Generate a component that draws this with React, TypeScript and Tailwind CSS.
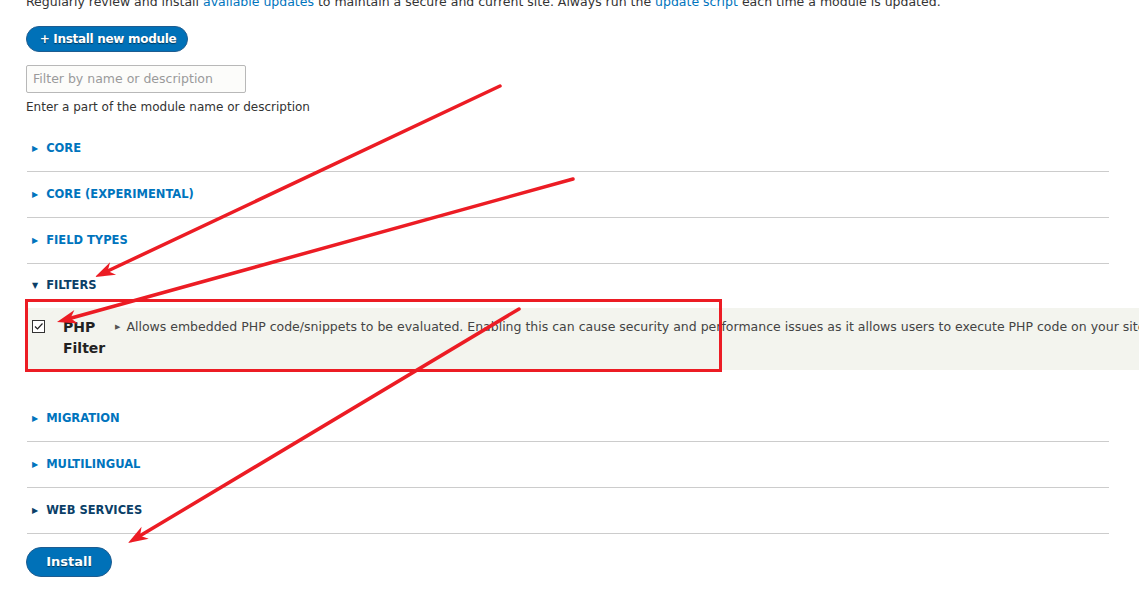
import React from 'react'

const sections = [
  { title: 'CORE', dark: false },
  { title: 'CORE (EXPERIMENTAL)', dark: false },
  { title: 'FIELD TYPES', dark: false },
]

const sectionsAfter = [
  { title: 'MIGRATION', dark: false },
  { title: 'MULTILINGUAL', dark: false },
  { title: 'WEB SERVICES', dark: true },
]

const arrows = [
  { from: [500, 86], to: [95, 277] },
  { from: [573, 179], to: [57, 322] },
  { from: [519, 309], to: [128, 543] },
]

const Arrow = ({ from, to }: { from: number[]; to: number[] }) => {
  const dx = to[0] - from[0]
  const dy = to[1] - from[1]
  const len = Math.hypot(dx, dy)
  const ux = dx / len
  const uy = dy / len
  const L = 20
  const W = 7
  const bx = to[0] - ux * L
  const by = to[1] - uy * L
  const p1 = `${bx - uy * W},${by + ux * W}`
  const p2 = `${bx + uy * W},${by - ux * W}`
  const notchX = to[0] - ux * (L - 6)
  const notchY = to[1] - uy * (L - 6)
  return (
    <g>
      <line x1={from[0]} y1={from[1]} x2={notchX} y2={notchY} stroke="#ec1c24" strokeWidth={3.5} strokeLinecap="round" />
      <polygon points={`${to[0]},${to[1]} ${p1} ${notchX},${notchY} ${p2}`} fill="#ec1c24" />
    </g>
  )
}

const Summary = ({ title, dark }: { title: string; dark: boolean }) => (
  <div className="flex items-center h-[46px] pl-[5px] border-b border-[#cccccc]">
    <span className={`text-[8px] mr-[8px] ${dark ? 'text-[#0b3f68]' : 'text-[#0074bd]'}`}>▶</span>
    <span className={`text-[11.5px] font-bold ${dark ? 'text-[#0b3f68]' : 'text-[#0074bd]'}`}>{title}</span>
  </div>
)

const App = () => {
  return (
    <div className="relative w-full h-[592px] overflow-hidden bg-white text-[#333333] font-['DejaVu_Sans',sans-serif]">
      <div className="pl-[26px] pr-[30px]">
        <p className="mt-[-7px] text-[12.5px] leading-[18px] whitespace-nowrap text-[#333333]">
          Regularly review and install <span className="text-[#0074bd]">available updates</span> to maintain a secure and current site. Always run the <span className="text-[#0074bd]">update script</span> each time a module is updated.
        </p>

        <button className="mt-[15px] h-[26px] w-[162px] pl-[2px] rounded-full bg-[#0071b8] border border-[#1e5c90] text-white text-[12px] tracking-[-0.3px] font-bold flex items-center justify-center [text-shadow:0_1px_1px_rgba(0,0,0,0.5)]">
          + Install new module
        </button>

        <div className="mt-[13px] h-[28px] w-[220px] border border-[#b8b8b8] rounded-[2px] bg-[#fcfcfa] flex items-center px-[6px] text-[12.5px] text-[#9a9a9a]">
          Filter by name or description
        </div>

        <div className="mt-[6px] text-[12px] leading-[16px] text-[#333333]">
          Enter a part of the module name or description
        </div>

        <div className="mt-[11px] ml-[1px]">
          {sections.map((s) => (
            <Summary key={s.title} title={s.title} dark={s.dark} />
          ))}

          <div className="pb-[26px]">
            <div className="flex items-center h-[44px] pl-[5px]">
              <span className="text-[8px] mr-[8px] text-[#0b3f68]">▼</span>
              <span className="text-[11.5px] font-bold text-[#0b3f68]">FILTERS</span>
            </div>
            <div className="w-[1120px] h-[62px] bg-[#f3f4ee] flex items-start pt-[9px] pl-[5px]">
              <div className="shrink-0 mt-[3px] w-[13px] h-[13px] border border-[#333333] bg-white flex items-center justify-center">
                <svg width="11" height="11" viewBox="0 0 11 11">
                  <path d="M2 5.5 L4.5 8 L9.5 2.5" stroke="#222222" strokeWidth="1.2" fill="none" />
                </svg>
              </div>
              <div className="shrink-0 ml-[18px] w-[52px] text-[14px] leading-[21px] font-bold text-[#222222]">
                PHP Filter
              </div>
              <div className="flex items-center h-[21px] whitespace-nowrap">
                <span className="text-[7px] text-[#555555] mr-[6px]">▶</span>
                <span className="text-[12.5px] text-[#444444]">
                  Allows embedded PHP code/snippets to be evaluated. Enabling this can cause security and performance issues as it allows users to execute PHP code on your site.
                </span>
              </div>
            </div>
          </div>

          {sectionsAfter.map((s) => (
            <Summary key={s.title} title={s.title} dark={s.dark} />
          ))}
        </div>

        <button className="mt-[13px] h-[30px] w-[86px] rounded-full bg-[#0071b8] border border-[#1e5c90] text-white text-[13px] font-bold flex items-center justify-center [text-shadow:0_1px_1px_rgba(0,0,0,0.5)]">
          Install
        </button>
      </div>

      {/* annotations drawn over the page */}
      <div className="absolute left-[25px] top-[299px] w-[697px] h-[73px] border-[3px] border-[#ec1c24] pointer-events-none" />
      <svg className="absolute inset-0 pointer-events-none" width="1139" height="592">
        {arrows.map((a, i) => (
          <Arrow key={i} from={a.from} to={a.to} />
        ))}
      </svg>
    </div>
  )
}

export default App
